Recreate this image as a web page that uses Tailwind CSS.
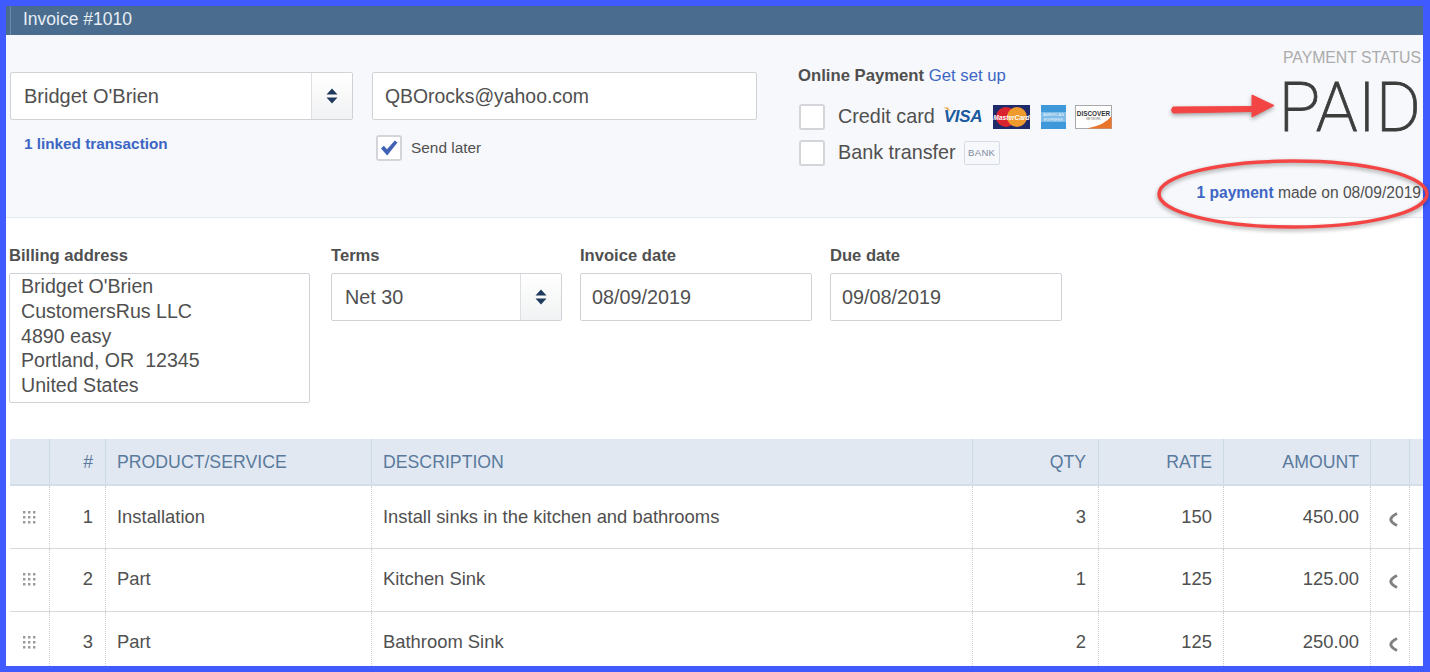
<!doctype html>
<html><head><meta charset="utf-8">
<script src="https://cdn.jsdelivr.net/npm/@tailwindcss/browser@4"></script>
</head>
<body class="m-0">
<div class="relative w-[1430px] h-[672px] overflow-hidden">
<div class="w-[1430px] h-[672px] overflow-hidden bg-white border-[#3f5bff] border-t-[6px] border-l-[6px] border-r-[7px] border-b-[6px] font-['Liberation_Sans',sans-serif] text-[#505050]">
  <!-- header -->
  <div class="h-[29px] bg-[#4a6d8f] pl-[17px] flex items-center text-[#e8eef4] text-[17.5px] leading-none relative">
    <span class="absolute left-[4px] top-0 bottom-0 w-px bg-[#6b8aa6]"></span>
    <span class="mt-[-2px]">Invoice #1010</span>
  </div>
  <!-- top panel -->
  <div class="h-[183px] bg-[#f7f8fb] border-b border-[#e3e8ee] flex">
    <div class="w-[366px] pl-[4px] pt-[37px] shrink-0">
      <div class="w-[343px] h-[48px] flex bg-white border border-[#cfd2d6] rounded-[2px]">
        <div class="flex-1 pl-[13px] flex items-center text-[20px]">Bridget O'Brien</div>
        <div class="w-[41px] border-l border-[#dcdfe3] bg-linear-to-b from-white to-[#f1f2f3] flex items-center justify-center">
          <svg width="12" height="16" viewBox="0 0 12 16"><path d="M6 0.5L11.5 6.5H0.5Z M0.5 9.5H11.5L6 15.5Z" fill="#1f3a5c"/></svg>
        </div>
      </div>
      <div class="mt-[15px] pl-[14px] text-[15.3px] font-bold text-[#3d66c4] leading-[18px]">1 linked transaction</div>
    </div>
    <div class="w-[426px] pt-[37px] shrink-0">
      <div class="w-[385px] h-[48px] bg-white border border-[#cfd2d6] rounded-[2px] flex items-center pl-[12px] pt-[2px] text-[19.4px]">QBOrocks@yahoo.com</div>
      <div class="mt-[15px] ml-[4px] flex items-center gap-[9px]">
        <div class="w-[26px] h-[26px] bg-white border-2 border-[#d3d5d8] rounded-[3px] flex items-center justify-center">
          <svg width="20" height="18" viewBox="0 0 20 18"><path d="M2 9.5L4.8 6.8L8 10.2L15.8 1.5L18.5 3.5L8.2 16.5Z" fill="#3f62b5"/></svg>
        </div>
        <span class="text-[15.4px] leading-none">Send later</span>
      </div>
    </div>
    <div class="w-[370px] pt-[32px] shrink-0">
      <div class="text-[16.7px] leading-[18px] whitespace-nowrap"><b>Online Payment</b> <span class="text-[#3d66c4]">Get set up</span></div>
      <div class="mt-[18px] flex items-center h-[28px] ml-[1px]">
        <div class="w-[26px] h-[26px] bg-white border-2 border-[#d3d5d8] rounded-[3px]"></div>
        <span class="ml-[13px] text-[19.8px]">Credit card</span>
        <span class="relative ml-[9px] text-[17px] font-bold italic text-[#1a5a9e] tracking-[-0.3px] w-[40px]">VISA<svg class="absolute left-[-1px] top-[3px]" width="7" height="5" viewBox="0 0 7 5"><path d="M0 0.5H5L7 4.5Q4 1.5 0 0.5Z" fill="#e8a33a"/></svg></span>
        <svg class="ml-[9px]" width="37" height="24" viewBox="0 0 37 24"><rect width="37" height="24" fill="#1f2a6b"/><circle cx="13" cy="12" r="10" fill="#d9242f"/><circle cx="24" cy="12" r="10" fill="#ee9a2c"/><text x="18.5" y="14.5" text-anchor="middle" font-size="6.6" font-weight="bold" font-style="italic" fill="#fff" font-family="Liberation Sans">MasterCard</text></svg>
        <svg class="ml-[11px]" width="25" height="24" viewBox="0 0 25 24"><rect width="25" height="24" fill="#3f98da"/><rect x="0" y="7" width="25" height="10" fill="#7fbde8"/><text x="12.5" y="11" text-anchor="middle" font-size="4" fill="#eaf5fc" font-family="Liberation Sans">AMERICAN</text><text x="12.5" y="16" text-anchor="middle" font-size="4" fill="#eaf5fc" font-family="Liberation Sans">EXPRESS</text></svg>
        <svg class="ml-[9px]" width="37" height="24" viewBox="0 0 37 24"><rect x="0.5" y="0.5" width="36" height="23" fill="#fff" stroke="#a9a9a9"/><path d="M12 23.5Q30 20 36.5 11V23.5Z" fill="#e9752a"/><text x="18.5" y="10.5" text-anchor="middle" font-size="6.4" font-weight="bold" fill="#333" font-family="Liberation Sans">DISCOVER</text><text x="18.5" y="15" text-anchor="middle" font-size="2.8" fill="#666" font-family="Liberation Sans">NETWORK</text></svg>
      </div>
      <div class="mt-[8px] flex items-center h-[28px] ml-[1px]">
        <div class="w-[26px] h-[26px] bg-white border-2 border-[#d3d5d8] rounded-[3px]"></div>
        <span class="ml-[13px] text-[19.8px]">Bank transfer</span>
        <span class="ml-[8px] w-[36px] h-[24px] border border-[#d5dbe5] rounded-[2px] flex items-center justify-center text-[9.5px] text-[#7d8ba0] tracking-[0.3px]">BANK</span>
      </div>
    </div>
    <div class="flex-1 pr-[2px] text-right flex flex-col items-end">
      <div class="mt-[13px] text-[15.8px] leading-[20px] text-[#ababab] whitespace-nowrap">PAYMENT STATUS</div>
      <div class="mt-[6px] text-[69px] leading-[68px] font-['Roboto',sans-serif] font-extralight [-webkit-text-stroke:0.8px_#3d3d3d] text-[#3d3d3d] whitespace-nowrap">PAID</div>
      <div class="mt-[42px] text-[15.6px] leading-[18px] whitespace-nowrap"><b class="text-[#3d66c4]">1 payment</b> made on 08/09/2019</div>
    </div>
  </div>
  <!-- fields -->
  <div class="h-[221px] flex pt-[28px] items-start">
    <div class="w-[325px] pl-[3px] shrink-0">
      <div class="text-[16.6px] font-bold leading-[20px]">Billing address</div>
      <div class="mt-[7px] w-[301px] h-[130px] border border-[#cfd2d6] rounded-[2px] pl-[11px] text-[19.6px] leading-[24.8px]">Bridget O'Brien<br>CustomersRus LLC<br>4890 easy<br>Portland, OR&nbsp; 12345<br>United States</div>
    </div>
    <div class="w-[249px] shrink-0">
      <div class="text-[16.6px] font-bold leading-[20px]">Terms</div>
      <div class="mt-[7px] w-[231px] h-[48px] flex border border-[#cfd2d6] rounded-[2px]">
        <div class="flex-1 pl-[13px] pt-[2px] flex items-center text-[19.8px]">Net 30</div>
        <div class="w-[41px] border-l border-[#dcdfe3] bg-linear-to-b from-white to-[#f1f2f3] flex items-center justify-center">
          <svg width="12" height="16" viewBox="0 0 12 16"><path d="M6 0.5L11.5 6.5H0.5Z M0.5 9.5H11.5L6 15.5Z" fill="#1f3a5c"/></svg>
        </div>
      </div>
    </div>
    <div class="w-[250px] shrink-0">
      <div class="text-[16.6px] font-bold leading-[20px]">Invoice date</div>
      <div class="mt-[7px] w-[232px] h-[48px] border border-[#cfd2d6] rounded-[2px] flex items-center pl-[11px] pt-[2px] text-[19.8px]">08/09/2019</div>
    </div>
    <div class="w-[232px] shrink-0">
      <div class="text-[16.6px] font-bold leading-[20px]">Due date</div>
      <div class="mt-[7px] w-[232px] h-[48px] border border-[#cfd2d6] rounded-[2px] flex items-center pl-[11px] pt-[2px] text-[19.8px]">09/08/2019</div>
    </div>
  </div>
  <!-- table -->
  <div class="ml-[4px] text-[18.4px]">
    <div class="grid grid-cols-[40px_56px_266px_601px_126px_125px_147px_39px_13px] h-[47px] bg-[#e1e8f2] border-b-2 border-[#d3deea] text-[#5a7a9c] text-[17.7px] rounded-tl-[2px] items-stretch">
      <div class="border-r border-[#cbd8e6]"></div>
      <div class="border-r border-[#cbd8e6] flex items-center justify-end pr-[12px] pt-[2px]">#</div>
      <div class="border-r border-[#cbd8e6] flex items-center pl-[11px] pt-[2px]">PRODUCT/SERVICE</div>
      <div class="border-r border-[#cbd8e6] flex items-center pl-[11px] pt-[2px]">DESCRIPTION</div>
      <div class="border-r border-[#cbd8e6] flex items-center justify-end pr-[12px] pt-[2px]">QTY</div>
      <div class="border-r border-[#cbd8e6] flex items-center justify-end pr-[11px] pt-[2px]">RATE</div>
      <div class="border-r border-[#cbd8e6] flex items-center justify-end pr-[11px] pt-[2px]">AMOUNT</div>
      <div class="border-r border-[#cbd8e6]"></div>
      <div></div>
    </div>
    <!-- row 1 -->
    <div class="grid grid-cols-[40px_56px_266px_601px_126px_125px_147px_39px_13px] h-[63px] border-b border-[#d9d9d9]">
      <div class="border-r border-dotted border-[#cfcfcf] flex items-center justify-center"><svg width="15" height="14" viewBox="0 0 15 14" fill="#9a9a9a"><path d="M1 1h2.4v2.4H1zM6 1h2.4v2.4H6zM11 1h2.4v2.4H11zM1 6h2.4v2.4H1zM6 6h2.4v2.4H6zM11 6h2.4v2.4H11zM1 11h2.4v2.4H1zM6 11h2.4v2.4H6zM11 11h2.4v2.4H11z"/></svg></div>
      <div class="border-r border-dotted border-[#cfcfcf] flex items-center justify-end pr-[12px]">1</div>
      <div class="border-r border-dotted border-[#cfcfcf] flex items-center pl-[11px]">Installation</div>
      <div class="border-r border-dotted border-[#cfcfcf] flex items-center pl-[11px]">Install sinks in the kitchen and bathrooms</div>
      <div class="border-r border-dotted border-[#cfcfcf] flex items-center justify-end pr-[12px]">3</div>
      <div class="border-r border-dotted border-[#cfcfcf] flex items-center justify-end pr-[11px]">150</div>
      <div class="border-r border-dotted border-[#cfcfcf] flex items-center justify-end pr-[11px]">450.00</div>
      <div class="border-r border-dotted border-[#cfcfcf] flex items-center justify-center pt-[4px] pl-[7px]"><svg width="9" height="15" viewBox="0 0 9 15"><path d="M8 1.5Q2 4.5 1.8 7.5Q2 10.5 8 13.5" fill="none" stroke="#808080" stroke-width="3"/></svg></div>
      <div></div>
    </div>
    <!-- row 2 -->
    <div class="grid grid-cols-[40px_56px_266px_601px_126px_125px_147px_39px_13px] h-[63px] border-b border-[#d9d9d9]">
      <div class="border-r border-dotted border-[#cfcfcf] flex items-center justify-center pb-[2px]"><svg width="15" height="14" viewBox="0 0 15 14" fill="#9a9a9a"><path d="M1 1h2.4v2.4H1zM6 1h2.4v2.4H6zM11 1h2.4v2.4H11zM1 6h2.4v2.4H1zM6 6h2.4v2.4H6zM11 6h2.4v2.4H11zM1 11h2.4v2.4H1zM6 11h2.4v2.4H6zM11 11h2.4v2.4H11z"/></svg></div>
      <div class="border-r border-dotted border-[#cfcfcf] flex items-center justify-end pr-[12px] pb-[2px]">2</div>
      <div class="border-r border-dotted border-[#cfcfcf] flex items-center pl-[11px] pb-[2px]">Part</div>
      <div class="border-r border-dotted border-[#cfcfcf] flex items-center pl-[11px] pb-[2px]">Kitchen Sink</div>
      <div class="border-r border-dotted border-[#cfcfcf] flex items-center justify-end pr-[12px] pb-[2px]">1</div>
      <div class="border-r border-dotted border-[#cfcfcf] flex items-center justify-end pr-[11px] pb-[2px]">125</div>
      <div class="border-r border-dotted border-[#cfcfcf] flex items-center justify-end pr-[11px] pb-[2px]">125.00</div>
      <div class="border-r border-dotted border-[#cfcfcf] flex items-center justify-center pt-[2px] pl-[7px]"><svg width="9" height="15" viewBox="0 0 9 15"><path d="M8 1.5Q2 4.5 1.8 7.5Q2 10.5 8 13.5" fill="none" stroke="#808080" stroke-width="3"/></svg></div>
      <div></div>
    </div>
    <!-- row 3 -->
    <div class="grid grid-cols-[40px_56px_266px_601px_126px_125px_147px_39px_13px] h-[62px]">
      <div class="border-r border-dotted border-[#cfcfcf] flex items-center justify-center pb-[2px]"><svg width="15" height="14" viewBox="0 0 15 14" fill="#9a9a9a"><path d="M1 1h2.4v2.4H1zM6 1h2.4v2.4H6zM11 1h2.4v2.4H11zM1 6h2.4v2.4H1zM6 6h2.4v2.4H6zM11 6h2.4v2.4H11zM1 11h2.4v2.4H1zM6 11h2.4v2.4H6zM11 11h2.4v2.4H11z"/></svg></div>
      <div class="border-r border-dotted border-[#cfcfcf] flex items-center justify-end pr-[12px] pb-[2px]">3</div>
      <div class="border-r border-dotted border-[#cfcfcf] flex items-center pl-[11px] pb-[2px]">Part</div>
      <div class="border-r border-dotted border-[#cfcfcf] flex items-center pl-[11px] pb-[2px]">Bathroom Sink</div>
      <div class="border-r border-dotted border-[#cfcfcf] flex items-center justify-end pr-[12px] pb-[2px]">2</div>
      <div class="border-r border-dotted border-[#cfcfcf] flex items-center justify-end pr-[11px] pb-[2px]">125</div>
      <div class="border-r border-dotted border-[#cfcfcf] flex items-center justify-end pr-[11px] pb-[2px]">250.00</div>
      <div class="border-r border-dotted border-[#cfcfcf] flex items-center justify-center pt-[2px] pl-[7px]"><svg width="9" height="15" viewBox="0 0 9 15"><path d="M8 1.5Q2 4.5 1.8 7.5Q2 10.5 8 13.5" fill="none" stroke="#808080" stroke-width="3"/></svg></div>
      <div></div>
    </div>
  </div>
</div>
  <!-- annotation overlay: red arrow and ellipse -->
  <svg class="absolute left-0 top-0 pointer-events-none" width="1430" height="672" viewBox="0 0 1430 672">
    <g fill="#f44545" stroke="#f44545" stroke-linejoin="round" class="drop-shadow-[0_2px_2px_rgba(0,0,0,0.35)]">
      <path d="M1173 107L1252 106.5V95L1274 105.5L1252 117V111.5L1173 113Q1170 110 1173 107Z" stroke-width="1"/>
      <ellipse cx="1293" cy="194" rx="134" ry="33" fill="none" stroke-width="3.5"/>
    </g>
  </svg>
</div>
</body></html>
